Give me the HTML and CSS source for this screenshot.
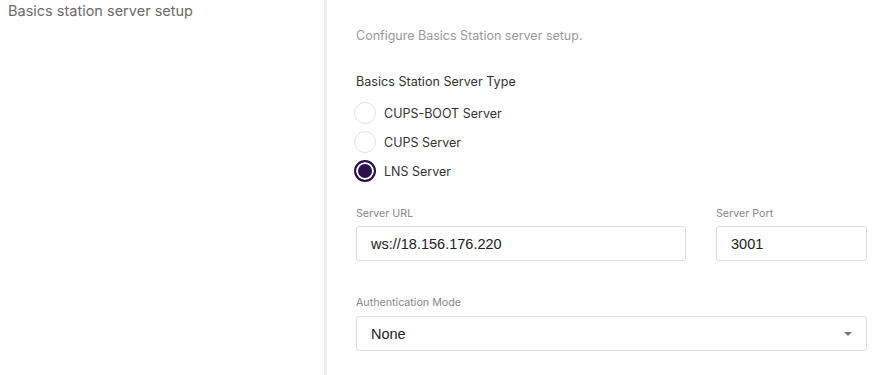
FILE: index.html
```html
<!DOCTYPE html>
<html>
<head>
<meta charset="utf-8">
<link rel="stylesheet" href="styles.css">
</head>
<body>
<div class="page">
  <aside class="side">
    <div class="side-title">Basics station server setup</div>
  </aside>
  <main class="main">
    <p class="desc">Configure Basics Station server setup.</p>
    <div class="group-title">Basics Station Server Type</div>
    <div class="radios">
      <label class="radio"><span class="dot"></span><span>CUPS-BOOT Server</span></label>
      <label class="radio"><span class="dot"></span><span>CUPS Server</span></label>
      <label class="radio"><span class="dot on"></span><span>LNS Server</span></label>
    </div>
    <div class="row">
      <div class="field url">
        <div class="label">Server URL</div>
        <div class="input">ws://18.156.176.220</div>
      </div>
      <div class="field port">
        <div class="label">Server Port</div>
        <div class="input">3001</div>
      </div>
    </div>
    <div class="field auth">
      <div class="label">Authentication Mode</div>
      <div class="input select"><span>None</span><span class="caret"></span></div>
    </div>
  </main>
</div>
</body>
</html>
```
FILE: styles.css
```css
* { box-sizing: border-box; }
html, body { margin: 0; padding: 0; background: #fff; }
body { font-family: Inter, "Noto Sans", sans-serif; color: #333; }
.page { display: flex; height: 375px; overflow: hidden; }
.side { width: 327px; border-right: 3px solid #efefef; padding: 2px 0 0 8px; flex: none; }
.side-title { font-size: 14.5px; line-height: 18px; color: #6b6b6b; }
.main { flex: 1; padding: 27px 15px 0 29px; }
.desc { margin: 0; font-size: 12.5px; line-height: 18px; color: #999; }
.group-title { margin-top: 28px; font-size: 12.6px; line-height: 18px; color: #333; }
.radios { display: flex; flex-direction: column; gap: 7px; margin-top: 11px; }
.radio { display: flex; align-items: center; gap: 8px; font-size: 12.5px; color: #333; height: 22px; }
.dot { width: 22px; height: 22px; border-radius: 50%; border: 1px solid #e3e3e3; background: #fff; margin-left: -2px; flex: none; }
.dot.on { border: 2px solid #2d0f4a; box-shadow: inset 0 0 0 2px #fff; background: #2d0f4a; }
.row { display: flex; gap: 30px; margin-top: 25px; }
.field { display: flex; flex-direction: column; }
.url { flex: 1; }
.port { width: 151px; }
.label { font-size: 10.7px; line-height: 14px; color: #888; margin-bottom: 5px; }
.input { height: 35px; border: 1px solid #dedede; border-radius: 3px; padding: 0 14px; display: flex; align-items: center; font-family: "Liberation Sans", Arial, sans-serif; font-size: 14.5px; color: #222; }
.auth { margin-top: 35px; }
.auth .label { margin-bottom: 6px; }
.select { justify-content: space-between; padding-right: 13px; }
.caret { width: 0; height: 0; border-left: 4px solid transparent; border-right: 4px solid transparent; border-top: 4px solid #777; margin-right: 1px; }
```
